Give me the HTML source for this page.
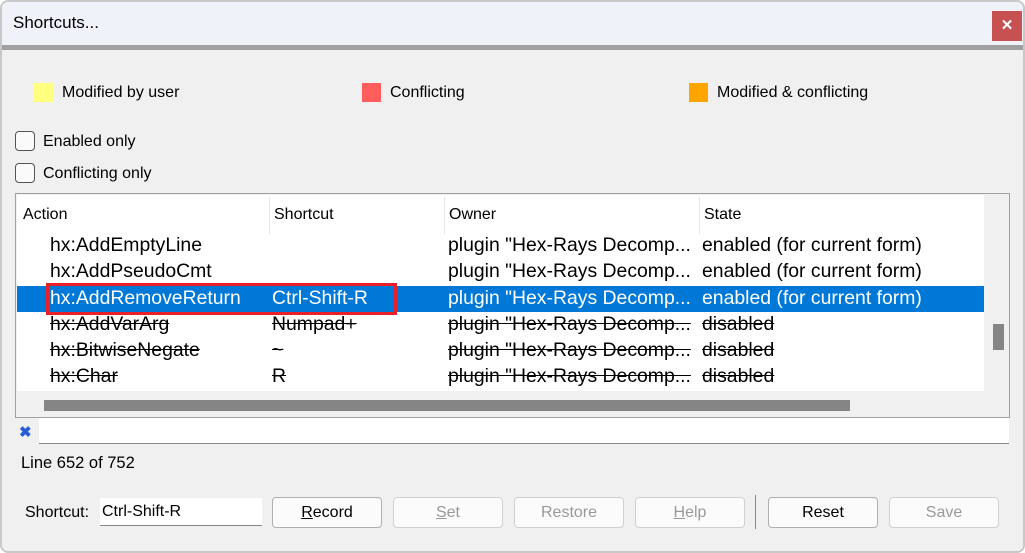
<!DOCTYPE html>
<html><head><style>
*{box-sizing:border-box;margin:0;padding:0}
body{width:1025px;height:553px;background:#fff;font-family:"Liberation Sans",sans-serif;font-size:16px;color:#000;position:relative;overflow:hidden}
.win{position:absolute;left:0;top:0;width:1025px;height:553px;border:2px solid #c8c8c8;border-radius:8px;background:#f0f0f0;overflow:hidden}
.title{position:absolute;left:0;top:0;width:1021px;height:43px;background:#eff3f9}
.bar{position:absolute;left:0;top:43px;width:1021px;height:5px;background:#a0a0a0}
.close{position:absolute;left:990px;top:9px;width:30px;height:30px;background:#c75050;color:#fff;font-weight:bold;text-align:center;line-height:29px;font-size:15px}
.abs{position:absolute;white-space:nowrap}
.sw{position:absolute;width:19px;height:19px}
.cb{position:absolute;width:20px;height:20px;border:1px solid #555;border-radius:4px;background:#fafafa}
.tbl{position:absolute;left:13px;top:191px;width:995px;height:225px;border:1px solid #a0a0a0;background:#f0f0f0}
.white{position:absolute;left:1px;top:1px;width:967px;height:196px;background:#fff}
.hd{position:absolute;top:12px;font-size:16px}
.sep{position:absolute;top:3px;width:1px;height:37px;background:#e5e5e5}
.row{position:absolute;left:0;width:967px;height:26px;font-size:19.4px;line-height:24px}
.row span{position:absolute;top:0;white-space:nowrap}
.s span{text-decoration:line-through}
.sel{background:#0078d7;color:#fff}
.btn{position:absolute;top:495px;height:31px;width:110px;border:1px solid #d0d0d0;border-radius:4px;background:#fbfbfb;text-align:center;line-height:29px;font-size:16px;color:#999}
.btn.on{border-color:#b0b0b0;color:#000}
</style></head><body>
<div class="win">
<div class="title"></div>
<div class="abs" style="left:11px;top:11px;font-size:17px">Shortcuts...</div>
<div class="bar"></div>
<div class="close">✕</div>

<div class="sw" style="left:32px;top:81px;background:#ffff80"></div>
<div class="abs" style="left:60px;top:82px">Modified by user</div>
<div class="sw" style="left:360px;top:81px;background:#ff5c5c"></div>
<div class="abs" style="left:388px;top:82px">Conflicting</div>
<div class="sw" style="left:687px;top:81px;background:#ffa500"></div>
<div class="abs" style="left:715px;top:82px">Modified &amp; conflicting</div>

<div class="cb" style="left:13px;top:129px"></div>
<div class="abs" style="left:41px;top:131px">Enabled only</div>
<div class="cb" style="left:13px;top:161px"></div>
<div class="abs" style="left:41px;top:163px">Conflicting only</div>

<div class="tbl">
 <div class="white"></div>
 <div class="hd" style="left:7px">Action</div>
 <div class="sep" style="left:253px"></div>
 <div class="hd" style="left:258px">Shortcut</div>
 <div class="sep" style="left:428px"></div>
 <div class="hd" style="left:433px">Owner</div>
 <div class="sep" style="left:683px"></div>
 <div class="hd" style="left:688px">State</div>

 <div class="row" style="top:39px"><span style="left:34px">hx:AddEmptyLine</span><span style="left:432px">plugin "Hex-Rays Decomp...</span><span style="left:686px">enabled (for current form)</span></div>
 <div class="row" style="top:65px"><span style="left:34px">hx:AddPseudoCmt</span><span style="left:432px">plugin "Hex-Rays Decomp...</span><span style="left:686px">enabled (for current form)</span></div>
 <div class="row sel" style="top:92px;left:1px;height:26px"><span style="left:33px">hx:AddRemoveReturn</span><span style="left:255px">Ctrl-Shift-R</span><span style="left:431px">plugin "Hex-Rays Decomp...</span><span style="left:685px">enabled (for current form)</span>
  <div style="position:absolute;left:29px;top:-3px;width:351px;height:32px;border:3px solid #e8202a"></div></div>
 <div class="row s" style="top:118px"><span style="left:34px">hx:AddVarArg</span><span style="left:256px">Numpad+</span><span style="left:432px">plugin "Hex-Rays Decomp...</span><span style="left:686px">disabled</span></div>
 <div class="row s" style="top:144px"><span style="left:34px">hx:BitwiseNegate</span><span style="left:256px">~</span><span style="left:432px">plugin "Hex-Rays Decomp...</span><span style="left:686px">disabled</span></div>
 <div class="row s" style="top:170px"><span style="left:34px">hx:Char</span><span style="left:256px">R</span><span style="left:432px">plugin "Hex-Rays Decomp...</span><span style="left:686px">disabled</span></div>

 <div style="position:absolute;left:977px;top:130px;width:11px;height:26px;background:#858585"></div>
 <div style="position:absolute;left:28px;top:206px;width:806px;height:11px;background:#858585"></div>
</div>

<div class="abs" style="left:17px;top:421px;color:#2a5bd7;font-size:15px;font-weight:bold">✖</div>
<div style="position:absolute;left:37px;top:416px;width:970px;height:26px;background:#fff;border-bottom:1px solid #888"></div>
<div class="abs" style="left:19px;top:452px;font-size:16.5px">Line 652 of 752</div>

<div class="abs" style="left:23px;top:502px">Shortcut:</div>
<div style="position:absolute;left:98px;top:496px;width:162px;height:28px;background:#fff;border-bottom:1px solid #888;padding-left:2px;line-height:28px">Ctrl-Shift-R</div>
<div class="btn on" style="left:270px"><u>R</u>ecord</div>
<div class="btn" style="left:391px"><u>S</u>et</div>
<div class="btn" style="left:512px">Restore</div>
<div class="btn" style="left:633px"><u>H</u>elp</div>
<div style="position:absolute;left:753px;top:493px;width:1px;height:34px;background:#888"></div>
<div class="btn on" style="left:766px">Reset</div>
<div class="btn" style="left:887px">Save</div>
</div>
</body></html>
